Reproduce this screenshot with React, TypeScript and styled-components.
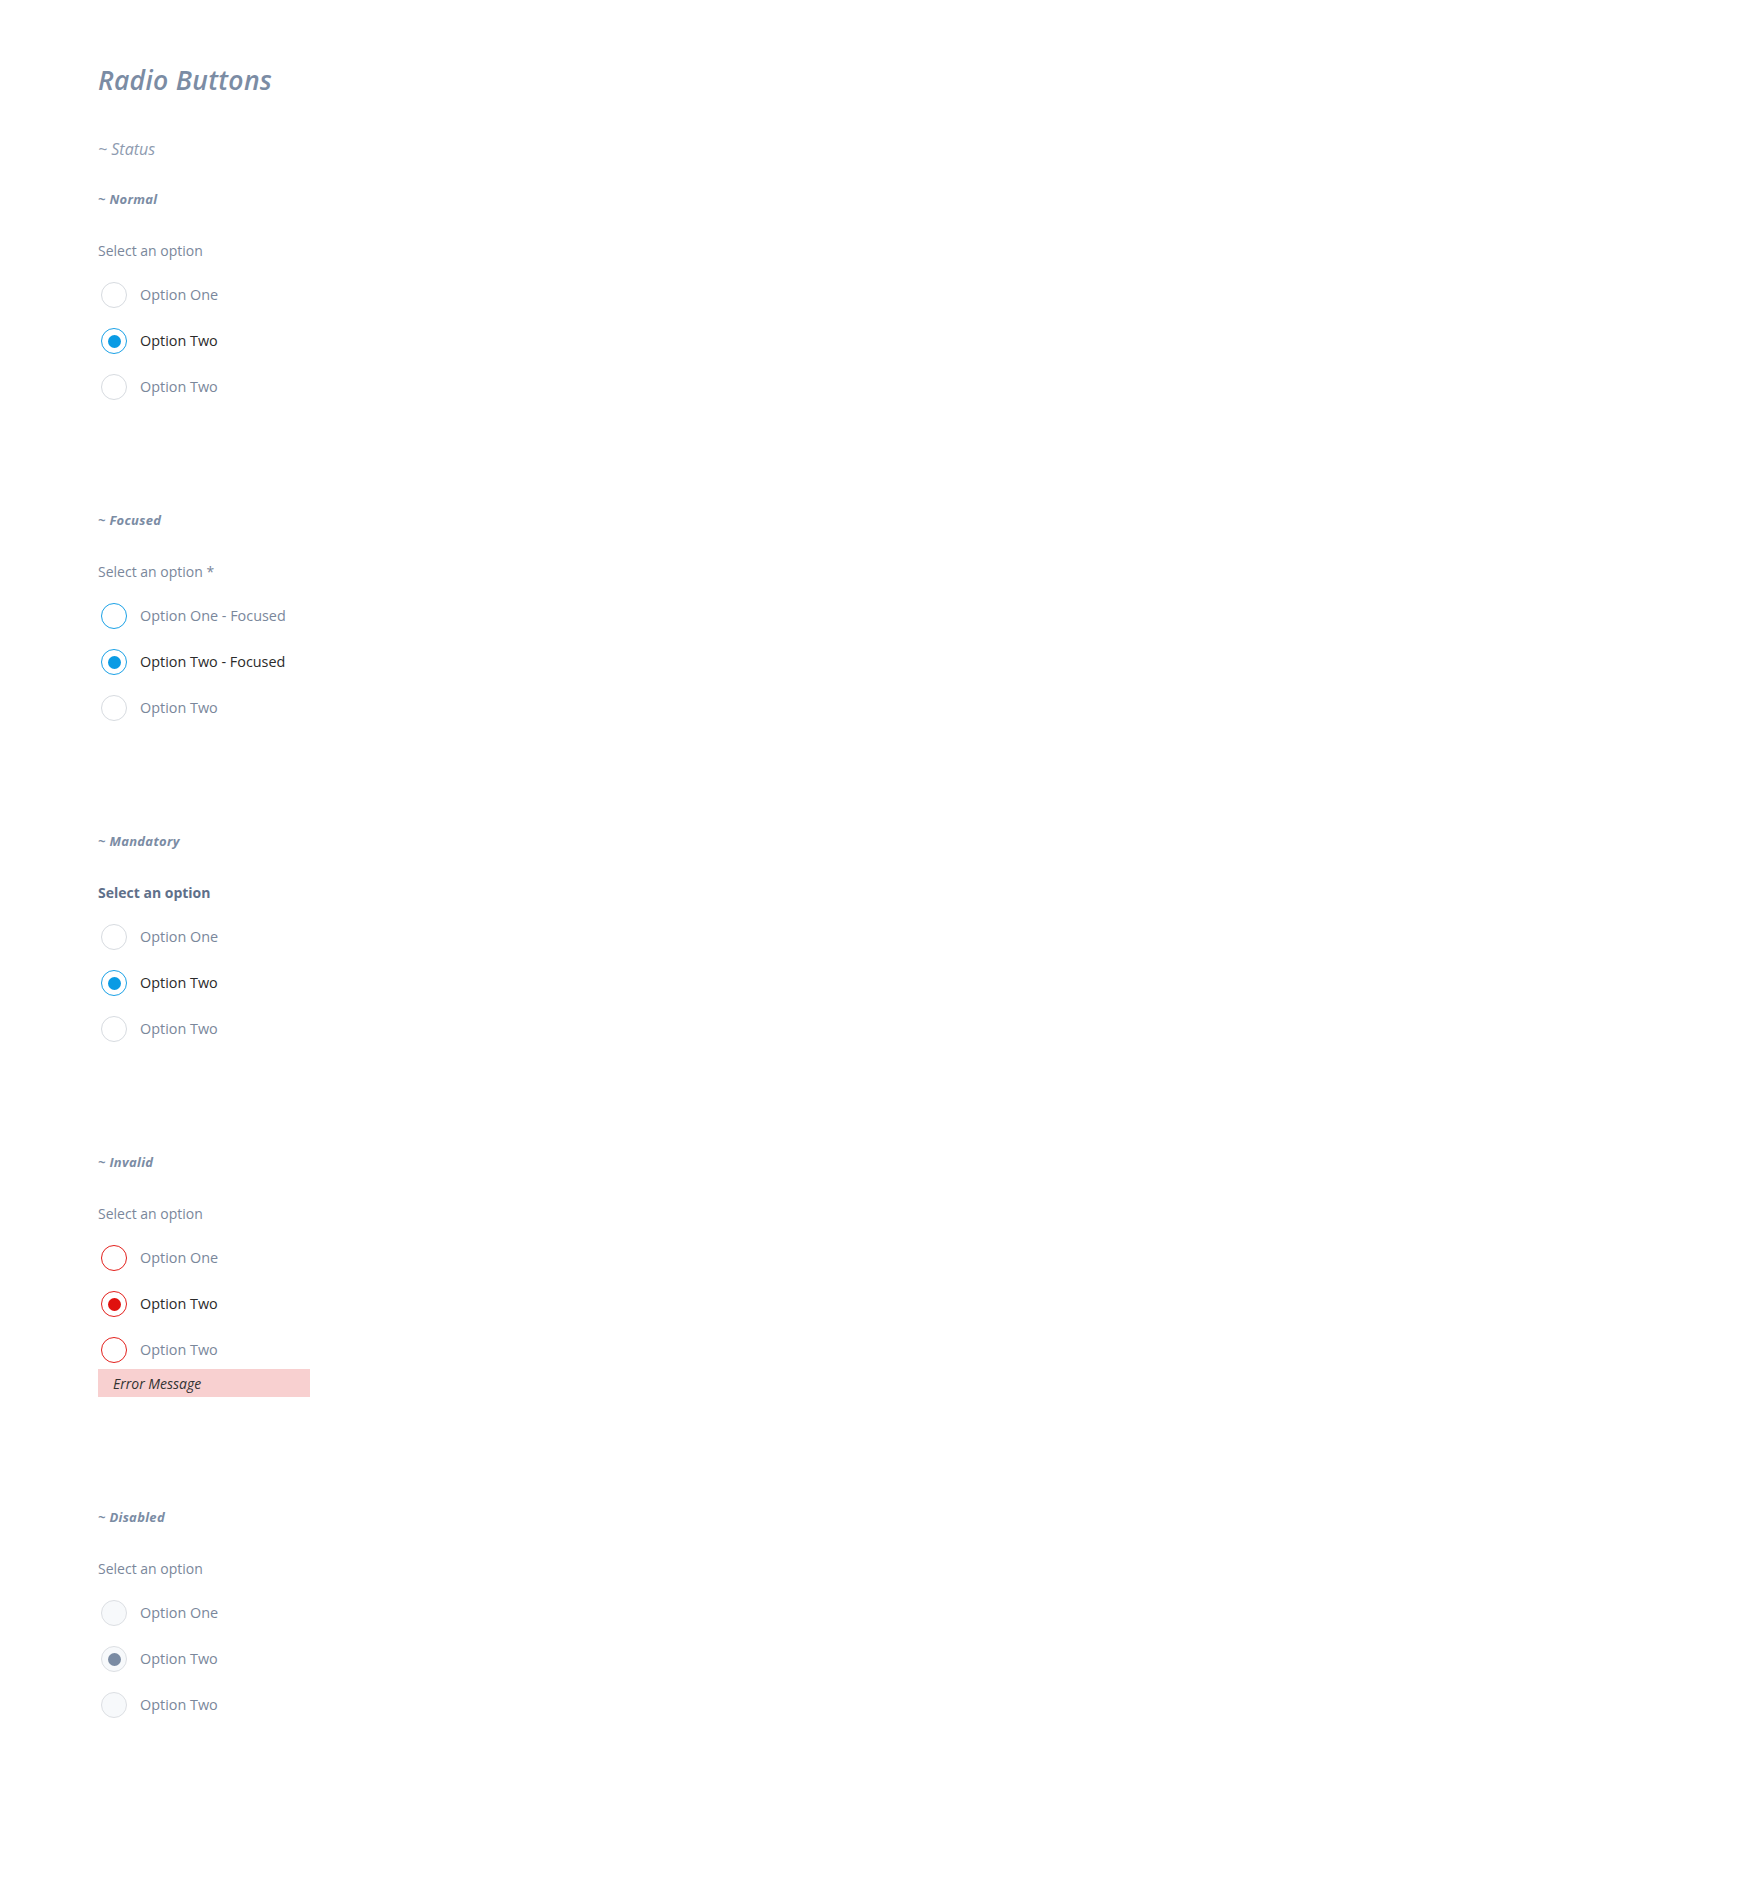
import React from 'react';
import styled, { createGlobalStyle } from 'styled-components';

const GlobalStyle = createGlobalStyle`
  body {
    margin: 0;
    background: #fff;
    font-family: 'Open Sans', 'Noto Sans', sans-serif;
  }
`;

type Tone = 'normal' | 'invalid' | 'disabled';

const Page = styled.div`
  display: flex;
  flex-direction: column;
  padding: 60px 0 120px 98px;
`;

const Title = styled.h1`
  margin: 0;
  font-size: 26.5px;
  line-height: 40px;
  font-style: italic;
  font-weight: 600;
  letter-spacing: 0.3px;
  color: #7b8ca4;
`;

const Subtitle = styled.div`
  margin-top: 37px;
  font-size: 16px;
  line-height: 24px;
  font-style: italic;
  font-weight: 400;
  color: #8e9bb0;
`;

const Section = styled.section`
  display: flex;
  flex-direction: column;
  align-items: flex-start;
  margin-top: 28px;

  & + & {
    margin-top: 110px;
  }
`;

const SectionTitle = styled.div`
  font-size: 13px;
  line-height: 20px;
  font-style: italic;
  font-weight: 700;
  letter-spacing: 0.3px;
  color: #7b8ca4;
`;

const GroupLabel = styled.div<{ $strong?: boolean }>`
  margin-top: 32px;
  font-size: 14px;
  line-height: 20px;
  font-weight: ${(p) => (p.$strong ? 700 : 400)};
  color: ${(p) => (p.$strong ? '#5f708a' : '#7a879b')};
`;

const OptionList = styled.div`
  display: flex;
  flex-direction: column;
  gap: 20px;
  margin-top: 21px;
`;

const RadioLabel = styled.label<{ $disabled?: boolean }>`
  display: flex;
  align-items: center;
  height: 26px;
  padding-left: 3px;
  cursor: ${(p) => (p.$disabled ? 'not-allowed' : 'pointer')};
  user-select: none;

  & input {
    position: absolute;
    opacity: 0;
    width: 0;
    height: 0;
  }
`;

const borderColor = (tone: Tone, active: boolean) => {
  if (tone === 'invalid') return '#e3201c';
  if (tone === 'disabled') return '#dcdfe3';
  return active ? '#1aa1e6' : '#d7dbe0';
};

const dotColor: Record<Tone, string> = {
  normal: '#0a9be4',
  invalid: '#e0110e',
  disabled: '#7a8ba3',
};

const Circle = styled.span<{ $tone: Tone; $checked: boolean; $focused: boolean }>`
  box-sizing: border-box;
  display: flex;
  align-items: center;
  justify-content: center;
  flex: none;
  width: 26px;
  height: 26px;
  border-radius: 50%;
  border: 1.3px solid ${(p) => borderColor(p.$tone, p.$checked || p.$focused)};
  background: ${(p) => (p.$tone === 'disabled' ? '#f7f9fb' : '#fff')};

  &::after {
    content: '';
    display: ${(p) => (p.$checked ? 'block' : 'none')};
    width: 13px;
    height: 13px;
    border-radius: 50%;
    background: ${(p) => dotColor[p.$tone]};
  }
`;

const OptionText = styled.span<{ $checked: boolean; $disabled?: boolean }>`
  margin-left: 13px;
  font-size: 14.4px;
  line-height: 20px;
  color: ${(p) => (p.$checked && !p.$disabled ? '#2b2b2b' : '#7a879b')};
`;

const ErrorMessage = styled.div`
  box-sizing: border-box;
  width: 212px;
  height: 28px;
  margin-top: 6px;
  padding-left: 15px;
  display: flex;
  align-items: center;
  background: #f8d0d0;
  font-size: 14px;
  font-style: italic;
  color: #333;
`;

type Option = { label: string; checked?: boolean; focused?: boolean };

type GroupProps = {
  name: string;
  heading: string;
  label: string;
  tone: Tone;
  strongLabel?: boolean;
  options: Option[];
  error?: string;
};

const RadioGroup = ({ name, heading, label, tone, strongLabel, options, error }: GroupProps) => {
  const disabled = tone === 'disabled';
  return (
    <Section>
      <SectionTitle>{heading}</SectionTitle>
      <GroupLabel $strong={strongLabel}>{label}</GroupLabel>
      <OptionList>
        {options.map((o, i) => (
          <RadioLabel key={i} $disabled={disabled}>
            <input type="radio" name={name} defaultChecked={o.checked} disabled={disabled} />
            <Circle $tone={tone} $checked={!!o.checked} $focused={!!o.focused} />
            <OptionText $checked={!!o.checked} $disabled={disabled}>
              {o.label}
            </OptionText>
          </RadioLabel>
        ))}
      </OptionList>
      {error && <ErrorMessage>{error}</ErrorMessage>}
    </Section>
  );
};

const basic: Option[] = [
  { label: 'Option One' },
  { label: 'Option Two', checked: true },
  { label: 'Option Two' },
];

export default function App() {
  return (
    <>
      <GlobalStyle />
      <Page>
        <Title>Radio Buttons</Title>
        <Subtitle>~ Status</Subtitle>
        <RadioGroup name="normal" heading="~ Normal" label="Select an option" tone="normal" options={basic} />
        <RadioGroup
          name="focused"
          heading="~ Focused"
          label="Select an option *"
          tone="normal"
          options={[
            { label: 'Option One - Focused', focused: true },
            { label: 'Option Two - Focused', checked: true },
            { label: 'Option Two' },
          ]}
        />
        <RadioGroup
          name="mandatory"
          heading="~ Mandatory"
          label="Select an option"
          tone="normal"
          strongLabel
          options={basic}
        />
        <RadioGroup
          name="invalid"
          heading="~ Invalid"
          label="Select an option"
          tone="invalid"
          options={basic}
          error="Error Message"
        />
        <RadioGroup name="disabled" heading="~ Disabled" label="Select an option" tone="disabled" options={basic} />
      </Page>
    </>
  );
}
